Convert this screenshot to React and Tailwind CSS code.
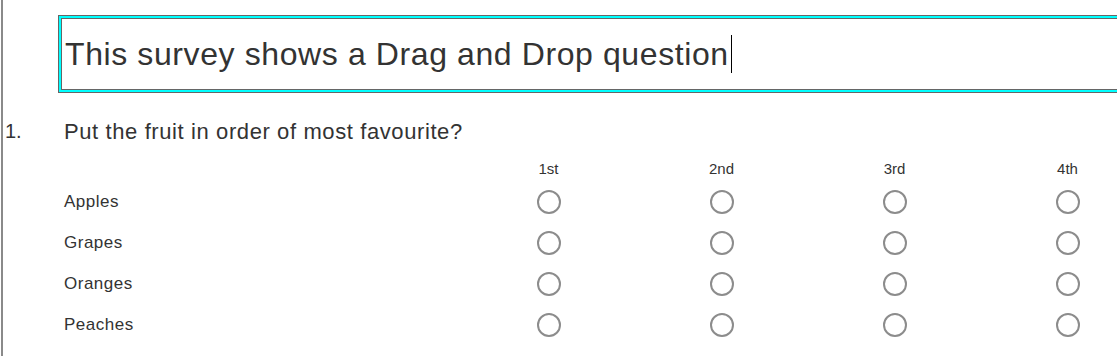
import React from 'react';

const COLS = ['1st', '2nd', '3rd', '4th'];
const ROWS = ['Apples', 'Grapes', 'Oranges', 'Peaches'];

function Radio() {
  return <span className="block w-[24px] h-[24px] rounded-full border-2 border-[#8c8c8c] bg-white" />;
}

export default function App() {
  return (
    <div className="w-[1117px] h-[356px] overflow-hidden bg-white text-[#333] font-['Liberation_Sans',Arial,sans-serif]">
      <div className="h-full ml-[1px] border-l-2 border-[#8a8a8a]">
        {/* Title */}
        <div className="pt-[15px] pl-[55px]">
          <div className="w-[1100px] border border-[#666]">
            <div className="border-2 border-[#00ffff]">
              <div className="h-[72px] border border-[#666] flex items-center pl-[3px]">
                <span className="text-[32px] tracking-[0.6px] leading-none">This survey shows a Drag and Drop question</span>
                <span className="ml-[2px] w-px h-[38px] bg-black" />
              </div>
            </div>
          </div>
        </div>

        {/* Question */}
        <div className="mt-[26px] flex items-center h-[24px]">
          <span className="w-[61px] pl-[2px] text-[20px]">1.</span>
          <span className="text-[22px] tracking-[0.6px]">Put the fruit in order of most favourite?</span>
        </div>

        <div className="grid grid-cols-[459px_173px_173px_173px_173px] mt-[14px]">
          <div className="h-[24px]" />
          {COLS.map(c => (
            <div key={c} className="h-[24px] flex items-center justify-center text-[15px]">{c}</div>
          ))}
          {ROWS.map(r => (
            <React.Fragment key={r}>
              <div className="h-[41px] flex items-center pl-[61px] text-[17px] tracking-[0.5px]">{r}</div>
              {COLS.map(c => (
                <div key={c} className="h-[41px] flex items-center justify-center"><Radio /></div>
              ))}
            </React.Fragment>
          ))}
        </div>
      </div>
    </div>
  );
}
